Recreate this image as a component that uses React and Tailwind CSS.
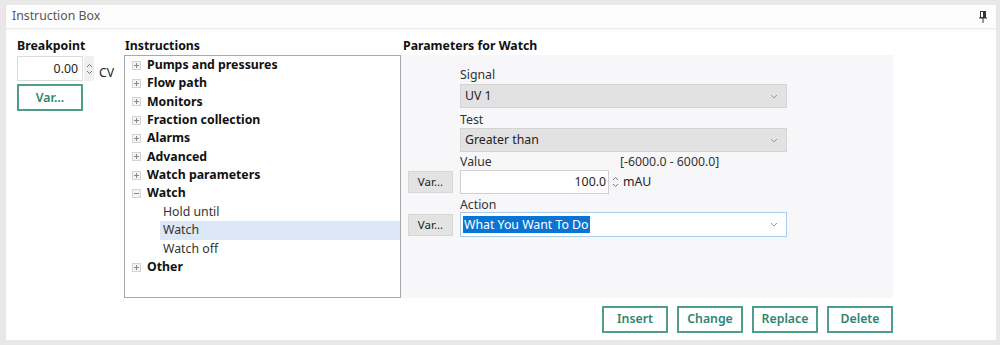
import React from 'react';

const font = { fontFamily: '"Noto Sans", "Open Sans", sans-serif' };

const treeItems = [
  { label: 'Pumps and pressures', group: true },
  { label: 'Flow path', group: true },
  { label: 'Monitors', group: true },
  { label: 'Fraction collection', group: true },
  { label: 'Alarms', group: true },
  { label: 'Advanced', group: true },
  { label: 'Watch parameters', group: true },
  { label: 'Watch', group: true, open: true },
  { label: 'Hold until' },
  { label: 'Watch', selected: true },
  { label: 'Watch off' },
  { label: 'Other', group: true },
];

const Expander = ({ open }) => (
  <svg width="9" height="9" viewBox="0 0 9 9" className="shrink-0">
    <rect x="0.5" y="0.5" width="8" height="8" fill="#f4f4f4" stroke="#d4d4d4" />
    <line x1="2" y1="4.5" x2="7" y2="4.5" stroke="#8a8a8a" />
    {!open && <line x1="4.5" y1="2" x2="4.5" y2="7" stroke="#8a8a8a" />}
  </svg>
);

const Spinner = () => (
  <div className="flex flex-col items-center justify-center w-[8px] leading-none">
    <svg width="7" height="5" viewBox="0 0 7 5"><path d="M1 4 L3.5 1.5 L6 4" fill="none" stroke="#777" /></svg>
    <svg width="7" height="5" viewBox="0 0 7 5" className="mt-[2px]"><path d="M1 1 L3.5 3.5 L6 1" fill="none" stroke="#777" /></svg>
  </div>
);

const Chevron = () => (
  <svg width="8" height="5" viewBox="0 0 8 5" className="shrink-0">
    <path d="M1 1 L4 4 L7 1" fill="none" stroke="#9a9a9a" />
  </svg>
);

const GreenButton = ({ children, className = '' }) => (
  <button className={`h-[27px] border-2 border-[#4f9d8b] bg-white text-[#2f8470] text-[12.3px] font-semibold ${className}`}>
    {children}
  </button>
);

const VarButton = () => (
  <button className="w-[45px] h-[22px] bg-[#e3e3e3] border border-[#d6d6d6] text-[11.5px] text-[#222]">Var...</button>
);

export default function App() {
  return (
    <div style={font} className="w-[1000px] h-[345px] bg-[#e8e8e8] pl-[6px] pr-[4px] pt-[5px] pb-[5px] overflow-hidden">
      <div className="h-full bg-white flex flex-col">
        {/* Header */}
        <div className="h-[24px] flex items-center justify-between pl-[6px] pr-[9px] bg-[#fdfdfd] border-b border-[#ececec] shadow-[0_1px_2px_rgba(0,0,0,0.05)]">
          <span className="text-[12.3px] text-[#555]">Instruction Box</span>
          <svg width="8" height="12" viewBox="0 0 8 12">
            <rect x="1.5" y="0.5" width="5" height="6" fill="none" stroke="#333" />
            <rect x="4" y="1" width="2" height="5" fill="#333" />
            <line x1="0" y1="7" x2="8" y2="7" stroke="#333" />
            <line x1="4" y1="7" x2="4" y2="12" stroke="#333" />
          </svg>
        </div>

        {/* Body */}
        <div className="flex pl-[11px] pt-[7px]">
          {/* Breakpoint */}
          <div className="w-[107px] shrink-0">
            <div className="h-[19px] text-[12.3px] font-bold text-[#111] leading-[19px]">Breakpoint</div>
            <div className="flex items-center">
              <div className="w-[66px] h-[25px] border border-[#dcdcdc] bg-white flex items-center justify-end pr-[4px] text-[12.3px] text-[#222]">0.00</div>
              <div className="ml-[1px] h-[25px] bg-[#f0f0f0] flex items-center px-[1px]"><Spinner /></div>
              <span className="ml-[5px] mt-[9px] text-[12.3px] text-[#222]">CV</span>
            </div>
            <GreenButton className="w-[66px] mt-[2px] h-[26px]">Var...</GreenButton>
          </div>

          {/* Instructions */}
          <div className="w-[277px] shrink-0">
            <div className="h-[19px] pl-[1px] text-[12.3px] font-bold text-[#111] leading-[19px]">Instructions</div>
            <div className="h-[243px] border border-[#a9a9a9] bg-white">
              {treeItems.map((item, i) => (
                <div key={i} className="h-[18.36px] flex items-center">
                  {item.group ? (
                    <div className="flex items-center pl-[7px]">
                      <Expander open={item.open} />
                      <span className="ml-[6px] text-[12.3px] font-bold text-[#111]">{item.label}</span>
                    </div>
                  ) : (
                    <div className={`ml-[35px] flex-1 h-full flex items-center pl-[3px] ${item.selected ? 'bg-[#dce8f7]' : ''}`}>
                      <span className="text-[12.3px] text-[#333]">{item.label}</span>
                    </div>
                  )}
                </div>
              ))}
            </div>
          </div>

          {/* Parameters */}
          <div className="w-[492px] shrink-0">
            <div className="h-[19px] pl-[2px] text-[12.3px] font-bold text-[#111] leading-[19px]">Parameters for Watch</div>
            <div className="h-[243px] bg-[#f7f7f9] pt-[12px] pl-[7px]">
              <div className="pl-[52px] w-[379px]">
                <div className="h-[16px] leading-[16px] text-[12.3px] text-[#333]">Signal</div>
                <div className="mt-[1px] h-[24px] bg-[#e2e2e2] border border-[#d4d4d4] flex items-center justify-between pl-[4px] pr-[8px] text-[12.3px] text-[#222]">
                  <span>UV 1</span>
                  <Chevron />
                </div>
                <div className="mt-[4px] h-[16px] leading-[16px] text-[12.3px] text-[#333]">Test</div>
                <div className="h-[24px] bg-[#e2e2e2] border border-[#d4d4d4] flex items-center justify-between pl-[4px] pr-[8px] text-[12.3px] text-[#222]">
                  <span>Greater than</span>
                  <Chevron />
                </div>
              </div>

              <div className="flex mt-[2px]">
                <div className="w-[52px] pt-[14px]"><VarButton /></div>
                <div>
                  <div className="h-[16px] leading-[16px] text-[12.3px] text-[#333] flex">
                    <span className="w-[160px]">Value</span>
                    <span>[-6000.0 - 6000.0]</span>
                  </div>
                  <div className="flex items-center">
                    <div className="w-[149px] h-[24px] bg-white border border-[#cfcfcf] flex items-center justify-end pr-[2px] text-[12.3px] text-[#222]">100.0</div>
                    <div className="ml-[2px]"><Spinner /></div>
                    <span className="ml-[4px] text-[12.3px] text-[#222]">mAU</span>
                  </div>
                </div>
              </div>

              <div className="flex mt-[3px]">
                <div className="w-[52px] pt-[14px]"><VarButton /></div>
                <div className="w-[327px]">
                  <div className="h-[15px] leading-[15px] text-[12.3px] text-[#333]">Action</div>
                  <div className="h-[25px] bg-white border border-[#a8cdee] flex items-center justify-between pl-[2px] pr-[8px] text-[12.3px]">
                    <span className="bg-[#0a74d4] text-white px-[1px] leading-[17px]">What You Want To Do</span>
                    <Chevron />
                  </div>
                </div>
              </div>
            </div>
          </div>
        </div>

        {/* Bottom buttons */}
        <div className="flex pl-[596px] gap-[9px] mt-[8px]">
          <GreenButton className="w-[66px]">Insert</GreenButton>
          <GreenButton className="w-[66px]">Change</GreenButton>
          <GreenButton className="w-[66px]">Replace</GreenButton>
          <GreenButton className="w-[66px]">Delete</GreenButton>
        </div>
      </div>
    </div>
  );
}
